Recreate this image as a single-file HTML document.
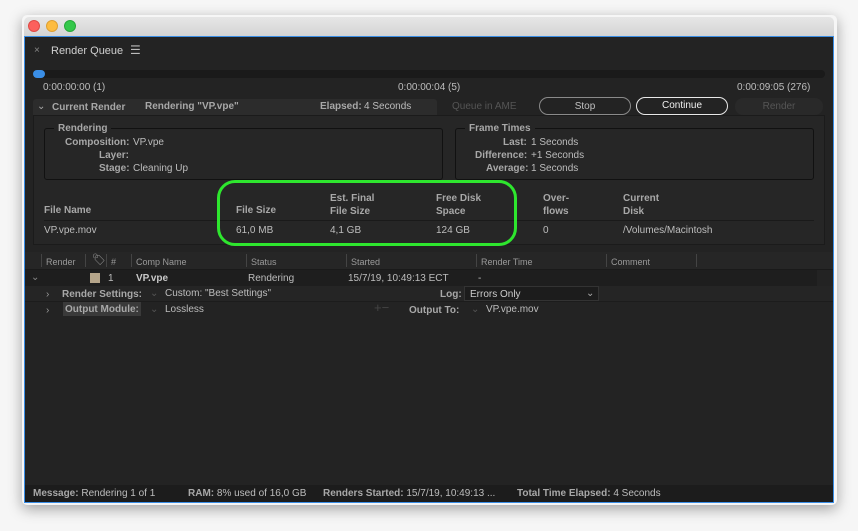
<!DOCTYPE html>
<html><head><meta charset="utf-8"><style>
*{margin:0;padding:0;box-sizing:border-box}
body{width:858px;height:531px;background:#f6f6f6;position:relative;overflow:hidden;font-family:"Liberation Sans",sans-serif;font-size:10px;color:#bdbdbd}
div,span{position:absolute;white-space:nowrap}
.b{font-weight:bold;color:#a8a8a8}
.l{color:#9a9a9a}
.t{line-height:12px}
</style></head><body>
<div style="left:22px;top:15px;width:815px;height:490px;box-shadow:0 4px 14px rgba(0,0,0,.35);border-radius:5px"></div>
<div style="left:24px;top:17px;width:810px;height:20px;background:linear-gradient(#e6e6e6,#d3d3d3);border-radius:5px 5px 0 0"></div>
<div style="left:28px;top:20px;width:12px;height:12px;border-radius:50%;background:#fc605c;border:1px solid #de4a45"></div>
<div style="left:46px;top:20px;width:12px;height:12px;border-radius:50%;background:#fdbc40;border:1px solid #dea033"></div>
<div style="left:64px;top:20px;width:12px;height:12px;border-radius:50%;background:#34c84a;border:1px solid #27a83a"></div>
<div style="left:24px;top:36px;width:810px;height:467px;background:#232323;border:1px solid #3a8ee6"></div>
<div class="t" style="left:34px;top:45px;color:#888">×</div>
<div class="t" style="left:51px;top:45px;font-size:11px;color:#d0d0d0">Render Queue</div>
<div class="t" style="left:130px;top:44px;font-size:12px;color:#bbb">☰</div>
<div style="left:33px;top:70px;width:792px;height:8px;background:#1a1a1a;border-radius:4px"></div>
<div style="left:33px;top:70px;width:12px;height:8px;background:#3a8ee6;border-radius:4px"></div>
<div class="t" style="left:43px;top:82px">0:00:00:00 (1)</div>
<div class="t" style="left:398px;top:82px">0:00:00:04 (5)</div>
<div class="t" style="left:737px;top:82px">0:00:09:05 (276)</div>
<div style="left:33px;top:99px;width:404px;height:17px;background:#2c2c2c;border-radius:3px 3px 0 0"></div>
<div class="t" style="left:37px;top:101px;color:#aaa">⌄</div>
<div class="t b" style="left:52px;top:102px">Current Render</div>
<div class="t b" style="left:145px;top:101px">Rendering "VP.vpe"</div>
<div class="t b" style="left:320px;top:101px">Elapsed:</div>
<div class="t" style="left:364px;top:101px">4 Seconds</div>
<div class="t" style="left:452px;top:101px;color:#555">Queue in AME</div>
<div style="left:539px;top:97px;width:92px;height:18px;border:1px solid #8a8a8a;border-radius:9px;text-align:center;line-height:17px;color:#c0c0c0">Stop</div>
<div style="left:636px;top:97px;width:92px;height:18px;border:1.5px solid #e8e8e8;border-radius:9px;text-align:center;line-height:16px;color:#f0f0f0">Continue</div>
<div style="left:735px;top:98px;width:88px;height:17px;background:#292929;border-radius:8px;text-align:center;line-height:17px;color:#555">Render</div>
<div style="left:33px;top:115px;width:792px;height:130px;background:#262626;border:1px solid #1b1b1b"></div>
<div style="left:44px;top:128px;width:399px;height:52px;border:1px solid #111;border-radius:3px"></div>
<div class="t b" style="left:54px;top:123px;background:#262626;padding:0 4px">Rendering</div>
<div class="t b" style="left:65px;top:137px">Composition:</div><div class="t" style="left:133px;top:137px">VP.vpe</div>
<div class="t b" style="left:99px;top:150px">Layer:</div>
<div class="t b" style="left:99px;top:163px">Stage:</div><div class="t" style="left:133px;top:163px">Cleaning Up</div>
<div style="left:455px;top:128px;width:359px;height:52px;border:1px solid #111;border-radius:3px"></div>
<div class="t b" style="left:465px;top:123px;background:#262626;padding:0 4px">Frame Times</div>
<div class="t b" style="left:503px;top:137px">Last:</div><div class="t" style="left:531px;top:137px">1 Seconds</div>
<div class="t b" style="left:475px;top:150px">Difference:</div><div class="t" style="left:531px;top:150px">+1 Seconds</div>
<div class="t b" style="left:486px;top:163px">Average:</div><div class="t" style="left:531px;top:163px">1 Seconds</div>
<div class="t b" style="left:44px;top:205px">File Name</div>
<div class="t b" style="left:236px;top:205px">File Size</div>
<div class="t b" style="left:330px;top:192px;line-height:13px">Est. Final<br>File Size</div>
<div class="t b" style="left:436px;top:192px;line-height:13px">Free Disk<br>Space</div>
<div class="t b" style="left:543px;top:192px;line-height:13px">Over-<br>flows</div>
<div class="t b" style="left:623px;top:192px;line-height:13px">Current<br>Disk</div>
<div style="left:44px;top:220px;width:770px;height:1px;background:#1a1a1a"></div>
<div class="t" style="left:44px;top:225px">VP.vpe.mov</div>
<div class="t" style="left:236px;top:225px">61,0 MB</div>
<div class="t" style="left:330px;top:225px">4,1 GB</div>
<div class="t" style="left:436px;top:225px">124 GB</div>
<div class="t" style="left:543px;top:225px">0</div>
<div class="t" style="left:623px;top:225px">/Volumes/Macintosh</div>
<div style="left:217px;top:180px;width:300px;height:66px;border:3px solid #2ee62e;border-radius:18px"></div>
<div style="left:25px;top:252px;width:808px;height:17px;background:#262626"></div>
<div style="left:25px;top:269px;width:808px;height:1px;background:#1a1a1a"></div>
<div class="t l" style="left:46px;top:256px;font-size:9px">Render</div>
<div class="t l" style="left:92px;top:254px;font-size:11px">🏷</div>
<div class="t l" style="left:111px;top:256px;font-size:9px">#</div>
<div class="t l" style="left:136px;top:256px;font-size:9px">Comp Name</div>
<div class="t l" style="left:251px;top:256px;font-size:9px">Status</div>
<div class="t l" style="left:351px;top:256px;font-size:9px">Started</div>
<div class="t l" style="left:481px;top:256px;font-size:9px">Render Time</div>
<div class="t l" style="left:611px;top:256px;font-size:9px">Comment</div>
<div style="left:41px;top:254px;width:1px;height:13px;background:#444"></div>
<div style="left:85px;top:254px;width:1px;height:13px;background:#444"></div>
<div style="left:106px;top:254px;width:1px;height:13px;background:#444"></div>
<div style="left:131px;top:254px;width:1px;height:13px;background:#444"></div>
<div style="left:246px;top:254px;width:1px;height:13px;background:#444"></div>
<div style="left:346px;top:254px;width:1px;height:13px;background:#444"></div>
<div style="left:476px;top:254px;width:1px;height:13px;background:#444"></div>
<div style="left:606px;top:254px;width:1px;height:13px;background:#444"></div>
<div style="left:696px;top:254px;width:1px;height:13px;background:#444"></div>
<div style="left:25px;top:270px;width:792px;height:16px;background:#1e1e1e"></div>
<div class="t" style="left:31px;top:272px;color:#888">⌄</div>
<div style="left:90px;top:273px;width:10px;height:10px;background:#b5a58a"></div>
<div class="t" style="left:108px;top:273px">1</div>
<div class="t b" style="left:136px;top:273px;color:#c8c8c8">VP.vpe</div>
<div class="t" style="left:248px;top:273px">Rendering</div>
<div class="t" style="left:348px;top:273px">15/7/19, 10:49:13 ECT</div>
<div class="t" style="left:478px;top:273px">-</div>
<div style="left:25px;top:286px;width:808px;height:16px;background:#252525;border-bottom:1px solid #1c1c1c"></div>
<div class="t" style="left:46px;top:289px;color:#999">›</div>
<div class="t b" style="left:62px;top:289px">Render Settings:</div>
<div class="t" style="left:150px;top:288px;color:#555">⌄</div>
<div class="t" style="left:165px;top:288px">Custom: "Best Settings"</div>
<div class="t b" style="left:440px;top:289px">Log:</div>
<div style="left:464px;top:286px;width:135px;height:15px;background:#1c1c1c;border:1px solid #333"></div>
<div class="t" style="left:470px;top:289px;color:#ccc">Errors Only</div>
<div class="t" style="left:586px;top:288px;color:#aaa">⌄</div>
<div class="t" style="left:46px;top:305px;color:#999">›</div>
<div style="left:63px;top:302px;width:78px;height:14px;background:#3a3a3a"></div>
<div class="t b" style="left:65px;top:304px">Output Module:</div>
<div class="t" style="left:150px;top:304px;color:#555">⌄</div>
<div class="t" style="left:165px;top:304px">Lossless</div>
<div class="t" style="left:374px;top:302px;color:#444;font-size:13px">+−</div>
<div class="t b" style="left:409px;top:305px">Output To:</div>
<div class="t" style="left:471px;top:304px;color:#555">⌄</div>
<div class="t" style="left:486px;top:304px">VP.vpe.mov</div>
<div style="left:25px;top:485px;width:808px;height:17px;background:#1c1c1c"></div>
<div class="t" style="left:33px;top:488px"><b style="color:#a8a8a8">Message:</b> Rendering 1 of 1</div>
<div class="t" style="left:188px;top:488px"><b style="color:#a8a8a8">RAM:</b> 8% used of 16,0 GB</div>
<div class="t" style="left:323px;top:488px"><b style="color:#a8a8a8">Renders Started:</b> 15/7/19, 10:49:13 ...</div>
<div class="t" style="left:517px;top:488px"><b style="color:#a8a8a8">Total Time Elapsed:</b> 4 Seconds</div>
</body></html>
